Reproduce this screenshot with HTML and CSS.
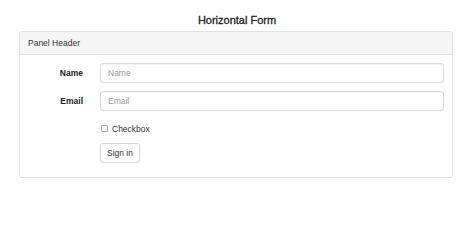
FILE: index.html
```html
<!DOCTYPE html>
<html>
<head>
    <meta charset="UTF-8">
    <title>Horizontal Form</title>
    <link rel="stylesheet" href="styles.css">
</head>
<body>
    <h1 class="title">Horizontal Form</h1>
    <div class="panel">
        <div class="panel-heading">Panel Header</div>
        <form class="panel-body">
            <label class="label" for="name">Name</label>
            <input class="field" id="name" type="text" placeholder="Name">

            <label class="label" for="email">Email</label>
            <input class="field" id="email" type="email" placeholder="Email">

            <div></div>
            <label class="check"><input type="checkbox"> Checkbox</label>

            <div></div>
            <div><button type="button" class="btn">Sign in</button></div>
        </form>
    </div>
</body>
</html>
```

FILE: styles.css
```css
body {
    margin: 0;
    padding-top: 14px;
    font-family: "Liberation Sans", Arial, sans-serif;
    font-size: 8.5px;
    color: #333;
    background: #fff;
}
.title {
    margin: 0 0 4px;
    font-size: 11px;
    font-weight: normal;
    -webkit-text-stroke: 0.3px #222;
    text-align: center;
    line-height: 13px;
    color: #222;
}
.panel {
    margin-left: 19px;
    width: 432px;
    border: 1px solid #e2e2e2;
    border-radius: 3px;
}
.panel-heading {
    height: 22px;
    line-height: 22px;
    padding-left: 8px;
    background: #f5f5f5;
    border-bottom: 1px solid #e2e2e2;
    border-radius: 3px 3px 0 0;
}
.panel-body {
    display: grid;
    grid-template-columns: 56px 1fr;
    column-gap: 16px;
    row-gap: 8px;
    align-items: center;
    padding: 8px 8px 14px 8px;
}
.label {
    text-align: right;
    padding-right: 1px;
    font-weight: bold;
    color: #222;
}
.field {
    box-sizing: border-box;
    height: 20px;
    width: 100%;
    margin: 0;
    padding: 0 7px;
    font-family: inherit;
    font-size: 8.5px;
    border: 1px solid #dadada;
    border-radius: 3px;
    box-shadow: inset 0 1px 1px rgba(0,0,0,0.05);
}
.field::placeholder { color: #999; }
.check {
    display: flex;
    align-items: center;
    gap: 4px;
    height: 13px;
    margin-top: 3px;
}
.check input {
    appearance: none;
    -webkit-appearance: none;
    box-sizing: border-box;
    margin: 0 0 0 1px;
    width: 7px;
    height: 7px;
    border: 1px solid #aaa;
    border-radius: 1px;
    background: #fff;
}
.btn {
    height: 20px;
    padding: 0 6px;
    font-family: inherit;
    font-size: 8.5px;
    color: #333;
    background: #fff;
    border: 1px solid #d6d6d6;
    border-radius: 3px;
}
```
